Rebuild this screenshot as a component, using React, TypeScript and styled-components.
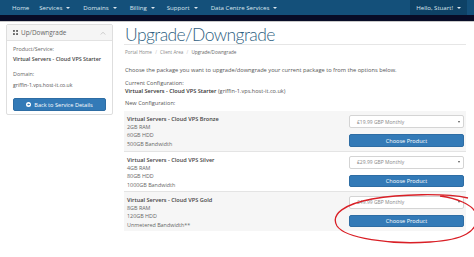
import React from 'react';
import styled, { createGlobalStyle } from 'styled-components';

const GlobalStyle = createGlobalStyle`
  html, body {
    margin: 0;
    padding: 0;
    background: #ffffff;
    font-family: 'Open Sans', 'Liberation Sans', sans-serif;
    color: #555;
  }
  * {
    box-sizing: border-box;
  }
`;

interface Plan {
  name: string;
  specs: string[];
  price: string;
}

const plans: Plan[] = [
  { name: 'Virtual Servers - Cloud VPS Bronze', specs: ['2GB RAM', '60GB HDD', '500GB Bandwidth'], price: '£19.99 GBP Monthly' },
  { name: 'Virtual Servers - Cloud VPS Silver', specs: ['4GB RAM', '80GB HDD', '1000GB Bandwidth'], price: '£29.99 GBP Monthly' },
  { name: 'Virtual Servers - Cloud VPS Gold', specs: ['8GB RAM', '120GB HDD', 'Unmetered Bandwidth**'], price: '£49.99 GBP Monthly' },
];

const menu = [
  { label: 'Home', left: 12, caret: false },
  { label: 'Services', left: 10, caret: true },
  { label: 'Domains', left: 13, caret: true },
  { label: 'Billing', left: 13, caret: true },
  { label: 'Support', left: 12, caret: true },
  { label: 'Data Centre Services', left: 13, caret: true },
];

const App = () => {
  return (
    <Frame>
      <GlobalStyle />
      <NavBar>
        <NavList>
          {menu.map((item) => (
            <NavItem key={item.label} $left={item.left}>
              {item.label}
              {item.caret && <Caret />}
            </NavItem>
          ))}
        </NavList>
        <AccountItem>
          Hello, Stuart!
          <Caret />
        </AccountItem>
      </NavBar>
      <DarkBand />

      <Page>
        <Sidebar>
          <PanelHeader>
            <GridIcon viewBox='0 0 8 8'>
              <rect x='0' y='0' width='3' height='3' />
              <rect x='5' y='0' width='3' height='3' />
              <rect x='0' y='5' width='3' height='3' />
              <rect x='5' y='5' width='3' height='3' />
            </GridIcon>
            <PanelTitle>Up/Downgrade</PanelTitle>
            <Chevron viewBox='0 0 8 5'>
              <polyline points='1,4.5 4,1.5 7,4.5' />
            </Chevron>
          </PanelHeader>
          <PanelBody>
            <SideLabel>Product/Service:</SideLabel>
            <SideValue>Virtual Servers - Cloud VPS Starter</SideValue>
            <SideLabel $top={6}>Domain:</SideLabel>
            <SideText>griffin-1.vps.host-it.co.uk</SideText>
            <BackButton>
              <BackIcon viewBox='0 0 10 10'>
                <circle cx='5' cy='5' r='5' fill='#fff' />
                <path d='M2.4 5 L5 2.6 L5 4.1 L7.6 4.1 L7.6 5.9 L5 5.9 L5 7.4 Z' fill='#337ab7' />
              </BackIcon>
              Back to Service Details
            </BackButton>
          </PanelBody>
        </Sidebar>

        <Main>
          <PageTitle>Upgrade/Downgrade</PageTitle>
          <Breadcrumb>
            Portal Home <Sep>/</Sep> Client Area <Sep>/</Sep> <Current>Upgrade/Downgrade</Current>
          </Breadcrumb>
          <Intro>
            Choose the package you want to upgrade/downgrade your current package to from the options below.
          </Intro>
          <Line $top={5}>Current Configuration:</Line>
          <Line>
            <strong>Virtual Servers - Cloud VPS Starter</strong> (griffin-1.vps.host-it.co.uk)
          </Line>
          <Line $top={4}>New Configuration:</Line>

          <PlanTable>
            {plans.map((plan, i) => (
              <PlanRow key={plan.name} $striped={i % 2 === 0}>
                <PlanInfo>
                  <PlanName>{plan.name}</PlanName>
                  {plan.specs.map((s) => (
                    <Spec key={s}>{s}</Spec>
                  ))}
                </PlanInfo>
                <PlanActions>
                  <PriceSelect>
                    <span>{plan.price}</span>
                    <SelectCaret />
                  </PriceSelect>
                  <ChooseButton>Choose Product</ChooseButton>
                </PlanActions>
              </PlanRow>
            ))}
          </PlanTable>
        </Main>
      </Page>

      <Annotation viewBox='0 0 474 257'>
        <path d='M468 198 C445 193 400 194 372 199 C345 204 330 214 337 226 C345 238 390 245 430 242 C462 240 480 232 476 214 C473 204 455 198 440 196' />
      </Annotation>
    </Frame>
  );
};

const Frame = styled.div`
  position: relative;
  width: 474px;
  height: 257px;
  overflow: hidden;
`;

const NavBar = styled.div`
  height: 15px;
  background: #14507a;
  display: flex;
  align-items: stretch;
  justify-content: space-between;
  padding-right: 7px;
`;

const NavList = styled.div`
  display: flex;
  align-items: center;
`;

const NavItem = styled.div<{ $left: number }>`
  margin-left: ${(p) => p.$left}px;
  font-size: 6.1px;
  color: #dde7ef;
  display: flex;
  align-items: center;
  white-space: nowrap;
`;

const AccountItem = styled.div`
  display: flex;
  align-items: center;
  padding: 0 6px 0 6px;
  background: #0e4266;
  font-size: 6.1px;
  color: #dde7ef;
  white-space: nowrap;
`;

const Caret = styled.span`
  display: inline-block;
  margin-left: 4px;
  border-top: 2px solid #dde7ef;
  border-left: 2px solid transparent;
  border-right: 2px solid transparent;
`;

const DarkBand = styled.div`
  height: 7px;
  background: #080c26;
  border-bottom: 1px solid #c9c9c9;
`;

const Page = styled.div`
  display: flex;
  align-items: flex-start;
  gap: 11px;
  padding: 2px 8px 0 6px;
`;

const Sidebar = styled.div`
  width: 107px;
  border: 1px solid #dedede;
  border-radius: 2px;
  flex-shrink: 0;
`;

const PanelHeader = styled.div`
  height: 16px;
  background: #f5f5f5;
  border-bottom: 1px solid #e2e2e2;
  display: flex;
  align-items: center;
  padding: 0 6px 0 6px;
`;

const GridIcon = styled.svg`
  width: 5px;
  height: 5px;
  fill: #666;
  margin-right: 3px;
`;

const PanelTitle = styled.div`
  flex: 1;
  font-size: 6.4px;
  color: #666;
`;

const Chevron = styled.svg`
  width: 6px;
  height: 4px;
  fill: none;
  stroke: #bbb;
  stroke-width: 1;
`;

const PanelBody = styled.div`
  padding: 4px 6px 3px 6px;
`;

const SideLabel = styled.div<{ $top?: number }>`
  margin-top: ${(p) => p.$top || 0}px;
  font-size: 5.4px;
  line-height: 9px;
  color: #666;
`;

const SideValue = styled.div`
  font-size: 5.4px;
  line-height: 10px;
  font-weight: 600;
  color: #444;
`;

const SideText = styled.div`
  font-size: 5.2px;
  line-height: 13px;
  color: #555;
`;

const BackButton = styled.div`
  margin-top: 6px;
  height: 13px;
  background: #337ab7;
  border: 1px solid #2e6da4;
  border-radius: 2px;
  display: flex;
  align-items: center;
  justify-content: center;
  font-size: 5.6px;
  color: #fff;
`;

const BackIcon = styled.svg`
  width: 5px;
  height: 5px;
  margin-right: 3px;
`;

const Main = styled.div`
  width: 342px;
`;

const PageTitle = styled.h1`
  margin: 0;
  font-family: 'Lato', 'Open Sans', sans-serif;
  font-weight: 300;
  font-size: 17.5px;
  letter-spacing: -0.6px;
  line-height: 19px;
  padding-top: 1px;
  padding-left: 1px;
  color: #2f5f82;
  border-bottom: 1px solid #e6e6e6;
  height: 21px;
`;

const Breadcrumb = styled.div`
  margin-top: 4px;
  padding-left: 1px;
  font-size: 4.6px;
  line-height: 6px;
  color: #8a8a8a;
`;

const Sep = styled.span`
  color: #c4c4c4;
  margin: 0 2px;
`;

const Current = styled.span`
  color: #666;
`;

const Intro = styled.div`
  margin-top: 11px;
  padding-left: 1px;
  font-size: 5.7px;
  line-height: 8px;
  color: #555;
`;

const Line = styled.div<{ $top?: number }>`
  margin-top: ${(p) => p.$top || 0}px;
  padding-left: 1px;
  font-size: 5.6px;
  line-height: 8px;
  color: #555;

  strong {
    font-weight: 600;
    color: #333;
  }
`;

const PlanTable = styled.div`
  margin-top: 4px;
`;

const PlanRow = styled.div<{ $striped: boolean }>`
  display: flex;
  justify-content: space-between;
  padding: 4px 2px 4px 3px;
  background: ${(p) => (p.$striped ? '#f6f6f6' : '#ffffff')};
  border-top: 1px solid #e4e4e4;
  height: 40px;

  &:first-child {
    border-top: none;
  }
`;

const PlanInfo = styled.div``;

const PlanName = styled.div`
  font-size: 5.6px;
  line-height: 8.2px;
  font-weight: 600;
  color: #444;
`;

const Spec = styled.div`
  font-size: 5.4px;
  line-height: 8.2px;
  color: #666;
`;

const PlanActions = styled.div`
  width: 115px;
  display: flex;
  flex-direction: column;
  gap: 6px;
`;

const PriceSelect = styled.div`
  height: 13px;
  background: #fff;
  border: 1px solid #d4d4d4;
  border-radius: 2px;
  display: flex;
  align-items: center;
  justify-content: space-between;
  padding: 0 3px 0 7px;
  font-size: 5px;
  color: #888;
`;

const SelectCaret = styled.span`
  border-top: 2px solid #555;
  border-left: 1.5px solid transparent;
  border-right: 1.5px solid transparent;
`;

const ChooseButton = styled.div`
  height: 13px;
  background: #337ab7;
  border: 1px solid #2e6da4;
  border-radius: 2px;
  display: flex;
  align-items: center;
  justify-content: center;
  font-size: 5.6px;
  color: #fff;
`;

const Annotation = styled.svg`
  position: absolute;
  left: 0;
  top: 0;
  width: 474px;
  height: 257px;
  pointer-events: none;
  fill: none;
  stroke: #d91f26;
  stroke-width: 1.3;
`;

export default App;
